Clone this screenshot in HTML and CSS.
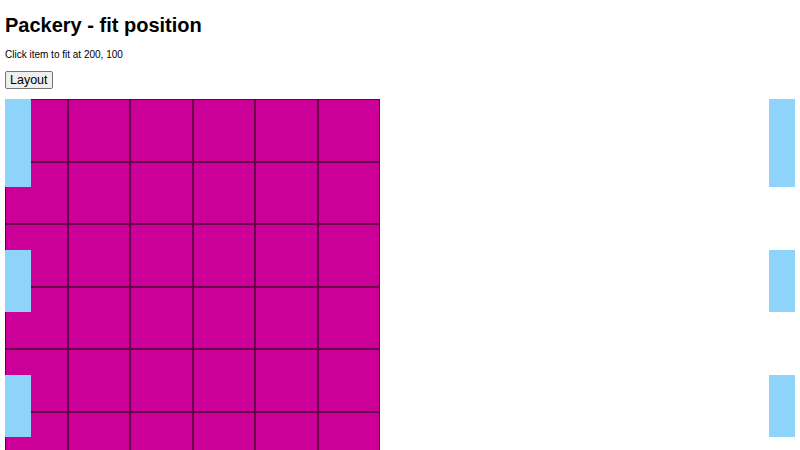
FILE: index.html
```html
<!DOCTYPE html>
<html>
<head>
<meta charset="utf-8">
<title>Packery - fit position</title>
<link rel="stylesheet" href="styles.css">
</head>
<body>
<h1 class="title">Packery - fit position</h1>
<p class="note">Click item to fit at 200, 100</p>
<button class="layout-btn">Layout</button>
<div class="stage">
  <div class="grid">
    <div class="cell"></div><div class="cell"></div><div class="cell"></div><div class="cell"></div><div class="cell"></div><div class="cell"></div>
    <div class="cell"></div><div class="cell"></div><div class="cell"></div><div class="cell"></div><div class="cell"></div><div class="cell"></div>
    <div class="cell"></div><div class="cell"></div><div class="cell"></div><div class="cell"></div><div class="cell"></div><div class="cell"></div>
    <div class="cell"></div><div class="cell"></div><div class="cell"></div><div class="cell"></div><div class="cell"></div><div class="cell"></div>
    <div class="cell"></div><div class="cell"></div><div class="cell"></div><div class="cell"></div><div class="cell"></div><div class="cell"></div>
    <div class="cell"></div><div class="cell"></div><div class="cell"></div><div class="cell"></div><div class="cell"></div><div class="cell"></div>
  </div>
  <div class="stamp stamp-l tall row-a"></div>
  <div class="stamp stamp-l row-b"></div>
  <div class="stamp stamp-l row-c"></div>
  <div class="stamp stamp-r tall row-a"></div>
  <div class="stamp stamp-r row-b"></div>
  <div class="stamp stamp-r row-c"></div>
</div>
</body>
</html>
```
FILE: styles.css
```css
html {
  overflow: hidden;
}
body {
  margin: 0 5px;
  font-family: "Liberation Sans", Arial, sans-serif;
  color: #000;
  background: #fff;
}
.title {
  font-size: 20px;
  font-weight: bold;
  margin: 0;
  padding-top: 13px;
  line-height: 24px;
}
.note {
  font-size: 10px;
  margin: 0;
  padding-top: 12px;
  line-height: 12px;
}
.layout-btn {
  display: block;
  margin-top: 10px;
  font-family: "Liberation Sans", Arial, sans-serif;
  font-size: 12.5px;
  height: 18px;
  padding: 0 4px;
  line-height: 14px;
  background: #efefef;
  border: 1px solid #767676;
  border-radius: 2px;
  color: #000;
}
.stage {
  position: relative;
  margin: 10px -5px 0;
  padding-left: 5px;
  height: 351px;
  overflow: hidden;
}
.grid {
  width: 375px;
  display: grid;
  grid-template-columns: repeat(6, 62.5px);
  grid-auto-rows: 62.5px;
}
.cell {
  background: #cc0099;
  border: 1px solid rgba(0, 0, 0, 0.5);
}
.stamp {
  position: absolute;
  background: #8ed4fa;
  height: 62px;
}
.stamp.tall {
  height: 88px;
}
.stamp-l {
  left: 0;
  width: 31px;
}
.stamp-r {
  right: 0;
  width: 31px;
}
.row-a { top: 0; }
.row-b { top: 151px; }
.row-c { top: 276px; }
```
